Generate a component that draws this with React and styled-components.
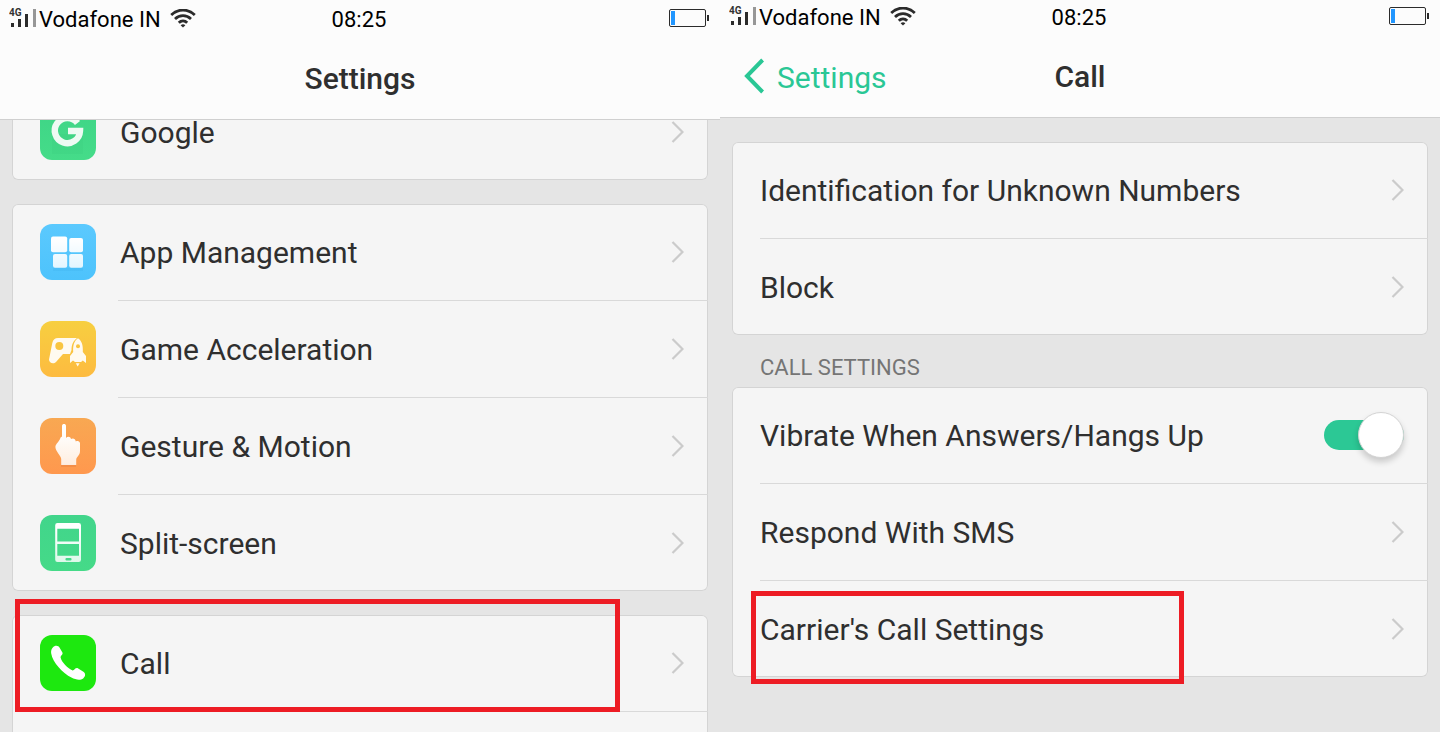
import React from 'react'
import styled, { createGlobalStyle } from 'styled-components'

const GlobalStyle = createGlobalStyle`
*, *::before, *::after{
    box-sizing:border-box;
}
body{
    margin:0;
    background-color:#fff;
    font-family:Roboto, "Noto Sans", sans-serif;
    color:#2f2f2f;
}
button{
    font:inherit;
    color:inherit;
    background:none;
    border:0;
    padding:0;
    text-align:left;
    cursor:pointer;
}
`

const Page = styled.div`
display:flex;
height:100vh;
padding-right:4px;
`

const Phone = styled.section`
flex:1;
min-width:0;
display:flex;
flex-direction:column;
overflow:hidden;
background-color:#e5e5e5;
`

const Header = styled.header`
flex:none;
position:relative;
z-index:1;
padding-top:${(props) => (props.$inset ? '2px' : '0')};
background-color:#fcfcfc;
border-bottom:1px solid #d0d0d0;
`

const StatusBar = styled.div`
display:grid;
grid-template-columns:1fr auto 1fr;
align-items:center;
height:34px;
padding:0 11px 0 9px;
font-size:22px;
line-height:26px;
color:#000;

.carrier{
    display:flex;
    align-items:center;
    gap:3px;
}
.text{
    padding-top:2px;
}
.wifi{
    margin-left:6px;
}
.battery{
    justify-self:end;
}
svg{
    display:block;
}
`

const TitleBar = styled.div`
display:grid;
grid-template-columns:1fr auto 1fr;
align-items:center;
height:83px;
padding:0 24px;

h1{
    grid-column:2;
    margin:0;
    padding-top:2px;
    font-size:30px;
    line-height:36px;
    font-weight:500;
}
`

const BackButton = styled.button`
display:flex;
align-items:center;
justify-self:start;
gap:12px;
&&{
    color:#2ac795;
}
font-size:30px;
line-height:36px;

span{
    padding-top:4px;
}
`

const Content = styled.main`
display:flex;
flex-direction:column;
padding:${(props) => (props.$scrolled ? '0 12px' : '24px 12px')};
margin-top:${(props) => (props.$scrolled ? '-36px' : '0')};
gap:24px;
`

const Group = styled.div`
h2{
    margin:-8px 28px 4px;
    padding-top:2px;
    font-size:22px;
    line-height:30px;
    font-weight:400;
    color:#757575;
}
`

const Card = styled.ul`
margin:0;
padding:0;
list-style:none;
background-color:#f5f5f5;
border-radius:6px;
box-shadow:inset 0 0 0 1px #d4d4d4;
`

const Item = styled.li`
position:relative;

.row{
    display:flex;
    align-items:flex-start;
    gap:22px;
    width:100%;
    padding-left:28px;
}
.icon{
    flex:none;
    display:block;
    margin-top:20px;
}
.line{
    flex:1;
    display:flex;
    align-items:center;
    justify-content:space-between;
    height:97px;
    padding-left:${(props) => (props.$icon ? '2px' : '0')};
    padding-right:24px;
    border-bottom:1px solid #d9d9d9;
    font-size:30px;
    line-height:36px;
}
.text{
    padding-top:2px;
}
&:last-child .line{
    height:96px;
    border-bottom:0;
}
`

const Switch = styled.input`
appearance:none;
position:relative;
width:80px;
height:30px;
margin:0;
border-radius:15px;
background-color:#2cc895;

&::after{
    content:"";
    position:absolute;
    top:-8px;
    right:0;
    width:46px;
    height:46px;
    border:1px solid #d4d4d4;
    border-radius:50%;
    background-color:#fff;
    box-shadow:0 4px 6px rgba(0,0,0,0.18);
}
&:not(:checked){
    background-color:#ccc;
}
&:not(:checked)::after{
    right:auto;
    left:0;
}
`

// red frame drawn over a row
const Highlight = styled.span`
position:absolute;
top:${(props) => props.$top};
right:${(props) => props.$right};
bottom:${(props) => props.$bottom};
left:${(props) => props.$left};
border:5px solid #ed1c24;
pointer-events:none;
`

const Chevron = () => (
    <svg width="14" height="24" viewBox="0 0 14 24" fill="none" stroke="#cbcbcb" strokeWidth="2.2" aria-hidden="true">
        <path d="M2.5 2 L12.5 12 L2.5 22" />
    </svg>
)

const Tile = ({ id, from, to, children }) => (
    <svg className="icon" width="56" height="56" viewBox="0 0 56 56" aria-hidden="true">
        <defs>
            <linearGradient id={id} x1="0" y1="0" x2="0" y2="1">
                <stop offset="0" stopColor={from} />
                <stop offset="1" stopColor={to} />
            </linearGradient>
            <linearGradient id={id + '-ink'} x1="0" y1="0" x2="0" y2="56" gradientUnits="userSpaceOnUse">
                <stop offset="0.25" stopColor="#fff" />
                <stop offset="0.85" stopColor="#fff" stopOpacity="0.82" />
            </linearGradient>
        </defs>
        <rect width="56" height="56" rx="12" fill={`url(#${id})`} />
        {children}
    </svg>
)

const GoogleIcon = () => (
    <Tile id="google" from="#3ed486" to="#45dc89">
        <path d="M12 30 H43 V50 H12 Z" fill="#34c57b" opacity="0.15" />
        <path d="M37.5 19 A12.6 12.6 0 1 0 40 27 H28" fill="none" stroke="#eefaf3" strokeWidth="6.4" />
    </Tile>
)

const AppsIcon = () => (
    <Tile id="apps" from="#5bc9fe" to="#4dc3fc">
        <path d="M13 44 H43 V47 H13 Z" fill="#3fb4ef" opacity="0.35" />
        <g fill="url(#apps-ink)">
            <rect x="11" y="12.6" width="16.2" height="15.6" rx="2" />
            <rect x="29.2" y="14" width="13.8" height="14.2" rx="2" />
            <rect x="13" y="30" width="14.2" height="13.8" rx="2" />
            <rect x="29.2" y="30" width="13.8" height="13.8" rx="2" />
        </g>
    </Tile>
)

const GameIcon = () => (
    <Tile id="game" from="#f7cf40" to="#fdbb40">
        <path
            d="M18 17 H37 C33 20 31.5 24 31.5 29 L30 33 H23 L16 41 C13.5 43.5 9 42 9 38.5 L12.3 22 C13 18.5 15 17 18 17 Z"
            fill="#fffaf0"
        />
        <circle cx="19.3" cy="25" r="4" fill="#f9c540" />
        <path
            d="M38 17.2 C41.8 20 43.2 24 42.8 31 L46 35 V42 L42.8 39.5 L41 41 H35 L33 39.5 L30 42 V35 L33.2 31 C32.8 24 34.2 20 38 17.2 Z"
            fill="#fffaf0"
            stroke="#fac240"
            strokeWidth="1"
            paintOrder="stroke"
        />
        <circle cx="38" cy="25.2" r="2" fill="#f9c540" />
        <path d="M35.8 42.3 H39.6 L37.7 45.4 Z" fill="#fffaf0" />
    </Tile>
)

const GestureIcon = () => (
    <Tile id="gesture" from="#f8a852" to="#ff984e">
        <path d="M21 46 H36 V49 H21 Z" fill="#e98242" opacity="0.5" />
        <path
            d="M22 8 C22 5.4 26 5.4 26 8 V20 C27.5 18 30.5 18.4 31 21 C33 19.8 35.4 20.6 35.8 23.4 C38 22.2 40 23.4 40 25.6 V33 C40 38 36.2 38.5 36.2 42 V47 H21.2 V41 C21.2 38 15.4 33 15.4 29 C15.4 26 20 23 20.4 19.8 L22 18.5 Z"
            fill="url(#gesture-ink)"
        />
    </Tile>
)

const SplitIcon = () => (
    <Tile id="split" from="#41d58b" to="#45da88">
        <path
            d="M17.5 8 H38.7 Q41 8 41 10.3 V44.7 Q41 47 38.7 47 H17.5 Q15.2 47 15.2 44.7 V10.3 Q15.2 8 17.5 8 Z M17.3 13.8 V26.4 H39 V13.8 Z M17.3 29 V40.8 H39 V29 Z M26.6 43 A1.2 1.2 0 0 0 26.6 45.4 H30.4 A1.2 1.2 0 0 0 30.4 43 Z"
            fill="url(#split-ink)"
            fillRule="evenodd"
        />
    </Tile>
)

const CallIcon = () => (
    <Tile id="call" from="#1de80f" to="#1de80f">
        <path
            d="M12.6 12.8 C15 10 18.4 10.4 19.8 13 L22.4 17.6 C23.4 19.6 20.4 20.6 20.6 22.6 C21.4 27 28 34 32.6 35.5 C34.4 35.6 35 32.6 37.8 33.2 L43.4 36.8 C46 38.6 45.4 41.6 43.2 43.4 C40.4 45.6 36 45 31.4 42.6 C23 38.4 12.6 27.6 11.2 18.6 C10.9 16.4 11.2 14.4 12.6 12.8 Z"
            fill="#fff"
        />
    </Tile>
)

const Status = () => (
    <StatusBar>
        <div className="carrier">
            <svg width="27" height="22" viewBox="0 0 27 22" aria-hidden="true">
                <text x="0" y="8" fontFamily="Roboto, sans-serif" fontSize="10" fontWeight="700" fill="#333">4G</text>
                <path d="M2 15 h3 v4 h-3 Z M9 11 h3 v8 h-3 Z M16 6 h3 v13 h-3 Z" fill="#2b2b2b" />
                <path d="M24 1 h3 v18 h-3 Z" fill="#979797" />
            </svg>
            <span className="text">Vodafone IN</span>
            <svg className="wifi" width="26" height="20" viewBox="0 0 26 20" fill="none" stroke="#2b2b2b" strokeWidth="2.8" aria-hidden="true">
                <path d="M1.2 6 C8 -0.6 18 -0.6 24.8 6" />
                <path d="M5 10 C9.6 5.6 16.4 5.6 21 10" />
                <path d="M8.8 13.8 C11.2 11.4 14.8 11.4 17.2 13.8" />
                <path d="M10.6 16.2 Q13 14.4 15.4 16.2 L13 18.6 Z" fill="#2b2b2b" stroke="none" />
            </svg>
        </div>
        <span className="text">08:25</span>
        <svg className="battery" width="40" height="20" viewBox="0 0 40 20" role="img" aria-label="Battery low">
            <rect x="0.5" y="0.5" width="36" height="17" rx="1.5" fill="none" stroke="#2b2b2b" />
            <rect x="2" y="2" width="4" height="14" fill="#2196fe" />
            <rect x="38" y="6" width="2" height="6" fill="#2b2b2b" />
        </svg>
    </StatusBar>
)

const LinkRow = ({ icon, text, children }) => (
    <Item $icon={!!icon}>
        <button type="button" className="row">
            {icon}
            <span className="line">
                <span className="text">{text}</span>
                <Chevron />
            </span>
        </button>
        {children}
    </Item>
)

const App = () => {

    return (
        <>
            <GlobalStyle />
            <Page>
                <Phone>
                    <Header $inset>
                        <Status />
                        <TitleBar>
                            <h1>Settings</h1>
                        </TitleBar>
                    </Header>

                    <Content $scrolled>
                        <Card>
                            <LinkRow icon={<GoogleIcon />} text="Google" />
                        </Card>

                        <Card>
                            <LinkRow icon={<AppsIcon />} text="App Management" />
                            <LinkRow icon={<GameIcon />} text="Game Acceleration" />
                            <LinkRow icon={<GestureIcon />} text="Gesture &amp; Motion" />
                            <LinkRow icon={<SplitIcon />} text="Split-screen" />
                        </Card>

                        <Card>
                            <LinkRow icon={<CallIcon />} text="Call">
                                <Highlight $top="-16px" $right="88px" $bottom="0" $left="3px" />
                            </LinkRow>
                            <Item>
                                <div className="line" />
                            </Item>
                        </Card>
                    </Content>
                </Phone>

                <Phone>
                    <Header>
                        <Status />
                        <TitleBar>
                            <BackButton type="button">
                                <svg width="21" height="36" viewBox="0 0 21 36" fill="none" stroke="currentColor" strokeWidth="4" aria-hidden="true">
                                    <path d="M18.6 2 L3 18 L18.6 34" />
                                </svg>
                                <span>Settings</span>
                            </BackButton>
                            <h1>Call</h1>
                        </TitleBar>
                    </Header>

                    <Content>
                        <Card>
                            <LinkRow text="Identification for Unknown Numbers" />
                            <LinkRow text="Block" />
                        </Card>

                        <Group>
                            <h2>CALL SETTINGS</h2>
                            <Card>
                                <Item>
                                    <label className="row">
                                        <span className="line">
                                            <span className="text">Vibrate When Answers/Hangs Up</span>
                                            <Switch type="checkbox" defaultChecked />
                                        </span>
                                    </label>
                                </Item>
                                <LinkRow text="Respond With SMS" />
                                <LinkRow text="Carrier's Call Settings">
                                    <Highlight $top="10px" $right="244px" $bottom="-7px" $left="19px" />
                                </LinkRow>
                            </Card>
                        </Group>
                    </Content>
                </Phone>
            </Page>
        </>
    )
}

export default App
